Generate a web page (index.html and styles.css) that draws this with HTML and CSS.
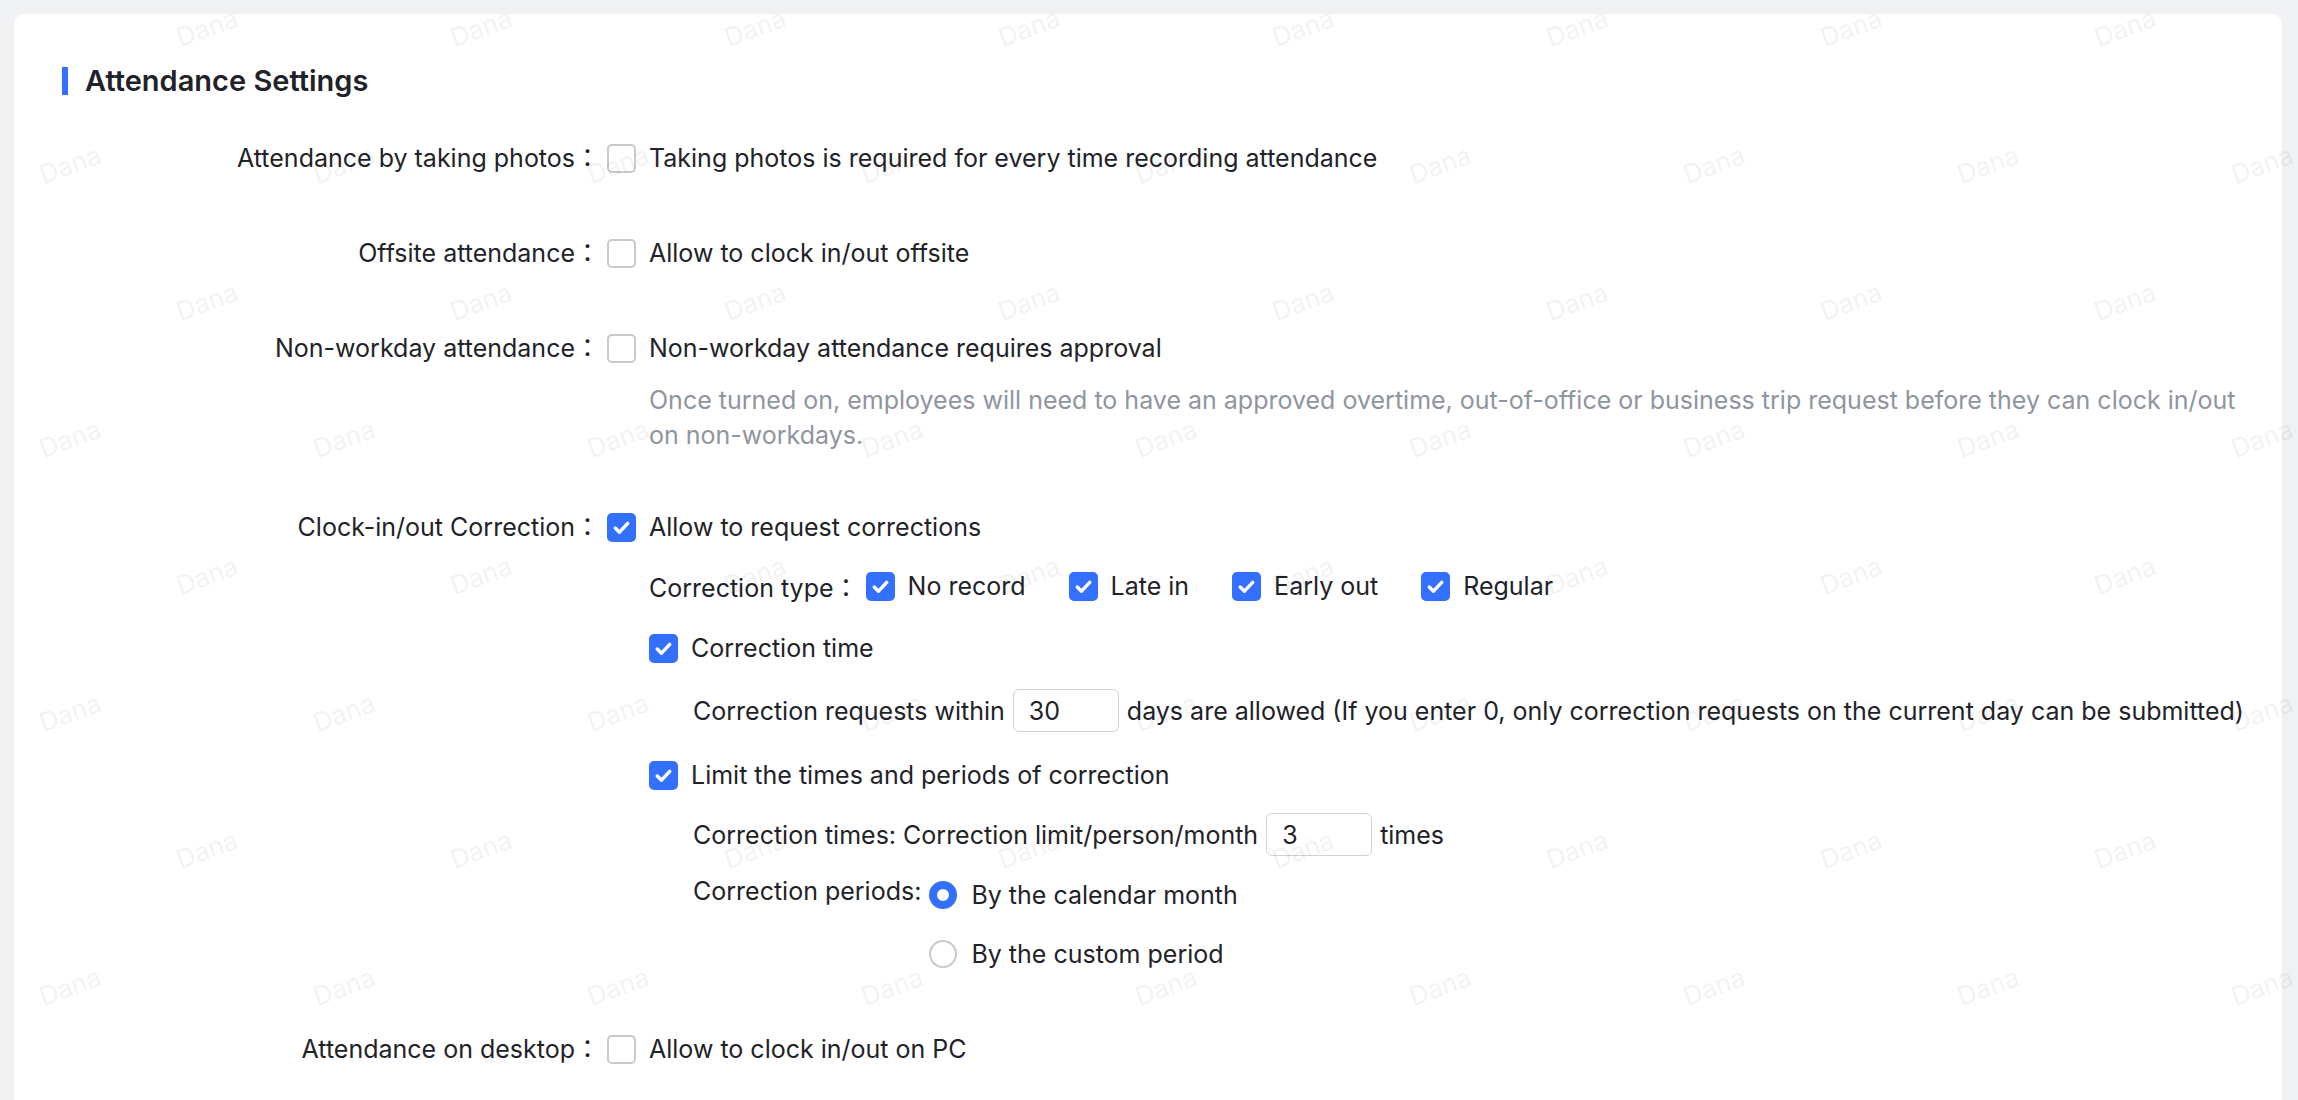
FILE: index.html
```html
<!DOCTYPE html>
<html lang="en">
<head>
    <meta charset="UTF-8">
    <meta name="viewport" content="width=device-width, initial-scale=1.0">
    <title>Attendance Settings</title>
    <link rel="stylesheet" href="styles.css">
</head>
<body>
    <div class="page">
        <div class="card">
            <h2 class="section-title">Attendance Settings</h2>

            <div class="form">
                <div class="form-row">
                    <div class="form-label">Attendance by taking photos：</div>
                    <div class="form-control">
                        <label class="option"><span class="checkbox"></span>Taking photos is required for every time recording attendance</label>
                    </div>
                </div>

                <div class="form-row">
                    <div class="form-label">Offsite attendance：</div>
                    <div class="form-control">
                        <label class="option"><span class="checkbox"></span>Allow to clock in/out offsite</label>
                    </div>
                </div>

                <div class="form-row">
                    <div class="form-label">Non-workday attendance：</div>
                    <div class="form-control">
                        <label class="option"><span class="checkbox"></span>Non-workday attendance requires approval</label>
                        <p class="hint">Once turned on, employees will need to have an approved overtime, out-of-office or business trip request before they can clock in/out on non-workdays.</p>
                    </div>
                </div>

                <div class="form-row">
                    <div class="form-label">Clock-in/out Correction：</div>
                    <div class="form-control">
                        <label class="option"><span class="checkbox checked"><svg viewBox="0 0 16 16"><path d="M4 8.3l2.7 2.7L12 5.4"/></svg></span>Allow to request corrections</label>

                        <div class="sub-options">
                            <div class="inline-row">
                                <span class="inline-label">Correction type：</span>
                                <label class="option"><span class="checkbox checked"><svg viewBox="0 0 16 16"><path d="M4 8.3l2.7 2.7L12 5.4"/></svg></span>No record</label>
                                <label class="option"><span class="checkbox checked"><svg viewBox="0 0 16 16"><path d="M4 8.3l2.7 2.7L12 5.4"/></svg></span>Late in</label>
                                <label class="option"><span class="checkbox checked"><svg viewBox="0 0 16 16"><path d="M4 8.3l2.7 2.7L12 5.4"/></svg></span>Early out</label>
                                <label class="option"><span class="checkbox checked"><svg viewBox="0 0 16 16"><path d="M4 8.3l2.7 2.7L12 5.4"/></svg></span>Regular</label>
                            </div>

                            <label class="option"><span class="checkbox checked"><svg viewBox="0 0 16 16"><path d="M4 8.3l2.7 2.7L12 5.4"/></svg></span>Correction time</label>
                            <div class="nested">
                                <div class="field-line">
                                    <span>Correction requests within</span>
                                    <input class="num-input" type="text" value="30">
                                    <span>days are allowed (If you enter 0, only correction requests on the current day can be submitted)</span>
                                </div>
                            </div>

                            <label class="option limit-option"><span class="checkbox checked"><svg viewBox="0 0 16 16"><path d="M4 8.3l2.7 2.7L12 5.4"/></svg></span>Limit the times and periods of correction</label>
                            <div class="nested">
                                <div class="field-line">
                                    <span>Correction times: Correction limit/person/month</span>
                                    <input class="num-input" type="text" value="3">
                                    <span>times</span>
                                </div>
                                <div class="period-line">
                                    <span class="period-label">Correction periods:</span>
                                    <div class="radio-group">
                                        <label class="option radio-option"><span class="radio checked"></span>By the calendar month</label>
                                        <label class="option radio-option"><span class="radio"></span>By the custom period</label>
                                    </div>
                                </div>
                            </div>
                        </div>
                    </div>
                </div>

                <div class="form-row">
                    <div class="form-label">Attendance on desktop：</div>
                    <div class="form-control">
                        <label class="option"><span class="checkbox"></span>Allow to clock in/out on PC</label>
                    </div>
                </div>
            </div>
        </div>
    </div>

    <div class="watermark" id="watermark"></div>

    <script>
        // tile the user name across the screen
        const watermark = document.getElementById('watermark');
        for (let r = 0; r < 9; r++) {
            const row = document.createElement('div');
            row.className = r % 2 ? 'wm-row odd' : 'wm-row';
            for (let c = 0; c < 9; c++) {
                const mark = document.createElement('span');
                mark.className = 'wm-mark';
                mark.textContent = 'Dana';
                row.appendChild(mark);
            }
            watermark.appendChild(row);
        }
    </script>
</body>
</html>
```

FILE: styles.css
```css
body {
    margin: 0;
    background-color: #f0f1f3;
    font-family: Inter, "Noto Sans CJK JP", sans-serif;
    font-size: 25px;
    color: #1f2329;
    overflow: hidden;
}
.page {
    padding: 14px 16px 0 14px;
}
.card {
    background-color: #ffffff;
    border-radius: 10px;
    padding: 49px 30px 60px 0;
    min-height: 1100px;
}
.section-title {
    display: flex;
    align-items: center;
    gap: 17px;
    margin: 0 0 39px 48px;
    font-size: 29px;
    font-weight: 600;
    line-height: 35px;
}
.section-title::before {
    content: "";
    width: 6px;
    height: 28px;
    background-color: #3370ff;
}
.form {
    display: flex;
    flex-direction: column;
    gap: 53px;
}
.form-row {
    display: grid;
    grid-template-columns: 586px 1fr;
    column-gap: 7px;
    align-items: start;
}
.form-label {
    text-align: right;
    line-height: 42px;
    white-space: nowrap;
}
.option {
    display: flex;
    align-items: center;
    gap: 13px;
    min-height: 42px;
    line-height: 35px;
    white-space: nowrap;
}
.checkbox {
    flex: none;
    box-sizing: border-box;
    width: 29px;
    height: 29px;
    border: 2px solid #c6c9cd;
    border-radius: 5px;
    background-color: #ffffff;
}
.checkbox.checked {
    border-color: #3370ff;
    background-color: #3370ff;
}
.checkbox svg {
    display: block;
    width: 100%;
    height: 100%;
}
.checkbox path {
    fill: none;
    stroke: #ffffff;
    stroke-width: 2.2;
    stroke-linecap: round;
    stroke-linejoin: round;
}
.hint {
    margin: 14px 0 0 42px;
    color: #8f959e;
    line-height: 35px;
}
.sub-options {
    display: flex;
    flex-direction: column;
    gap: 20px;
    margin-top: 17px;
    padding-left: 42px;
}
.limit-option {
    margin-top: 2px;
}
.limit-option + .nested {
    margin-top: -3px;
}
.inline-row {
    display: flex;
    align-items: center;
    gap: 43px;
    min-height: 42px;
}
.inline-label {
    margin-right: -36px;
    white-space: nowrap;
}
.nested {
    display: flex;
    flex-direction: column;
    gap: 18px;
    padding-left: 44px;
}
.field-line {
    display: flex;
    align-items: center;
    gap: 8px;
    min-height: 42px;
    white-space: nowrap;
}
.num-input {
    box-sizing: border-box;
    width: 106px;
    height: 43px;
    padding: 0 15px;
    border: 1.5px solid #d0d3d6;
    border-radius: 6px;
    font-family: inherit;
    font-size: 25px;
    color: #1f2329;
    background: transparent;
}
.period-line {
    display: flex;
    align-items: flex-start;
    gap: 8px;
}
.period-label {
    line-height: 35px;
}
.radio-group {
    display: flex;
    flex-direction: column;
    gap: 17px;
}
.radio-option {
    gap: 14px;
}
.radio {
    flex: none;
    box-sizing: border-box;
    width: 28px;
    height: 28px;
    border: 2px solid #c6c9cd;
    border-radius: 50%;
    background-color: #ffffff;
}
.radio.checked {
    border: 8px solid #3370ff;
}
.watermark {
    position: fixed;
    top: -41px;
    left: 70px;
    pointer-events: none;
    display: flex;
    flex-direction: column;
}
.wm-row {
    display: flex;
    height: 137px;
    align-items: center;
}
.wm-row.odd {
    margin-left: -137px;
}
.wm-mark {
    width: 274px;
    flex: none;
    text-align: center;
    font-size: 26px;
    color: rgba(31, 35, 41, 0.06);
    transform: rotate(-20deg);
}
```
